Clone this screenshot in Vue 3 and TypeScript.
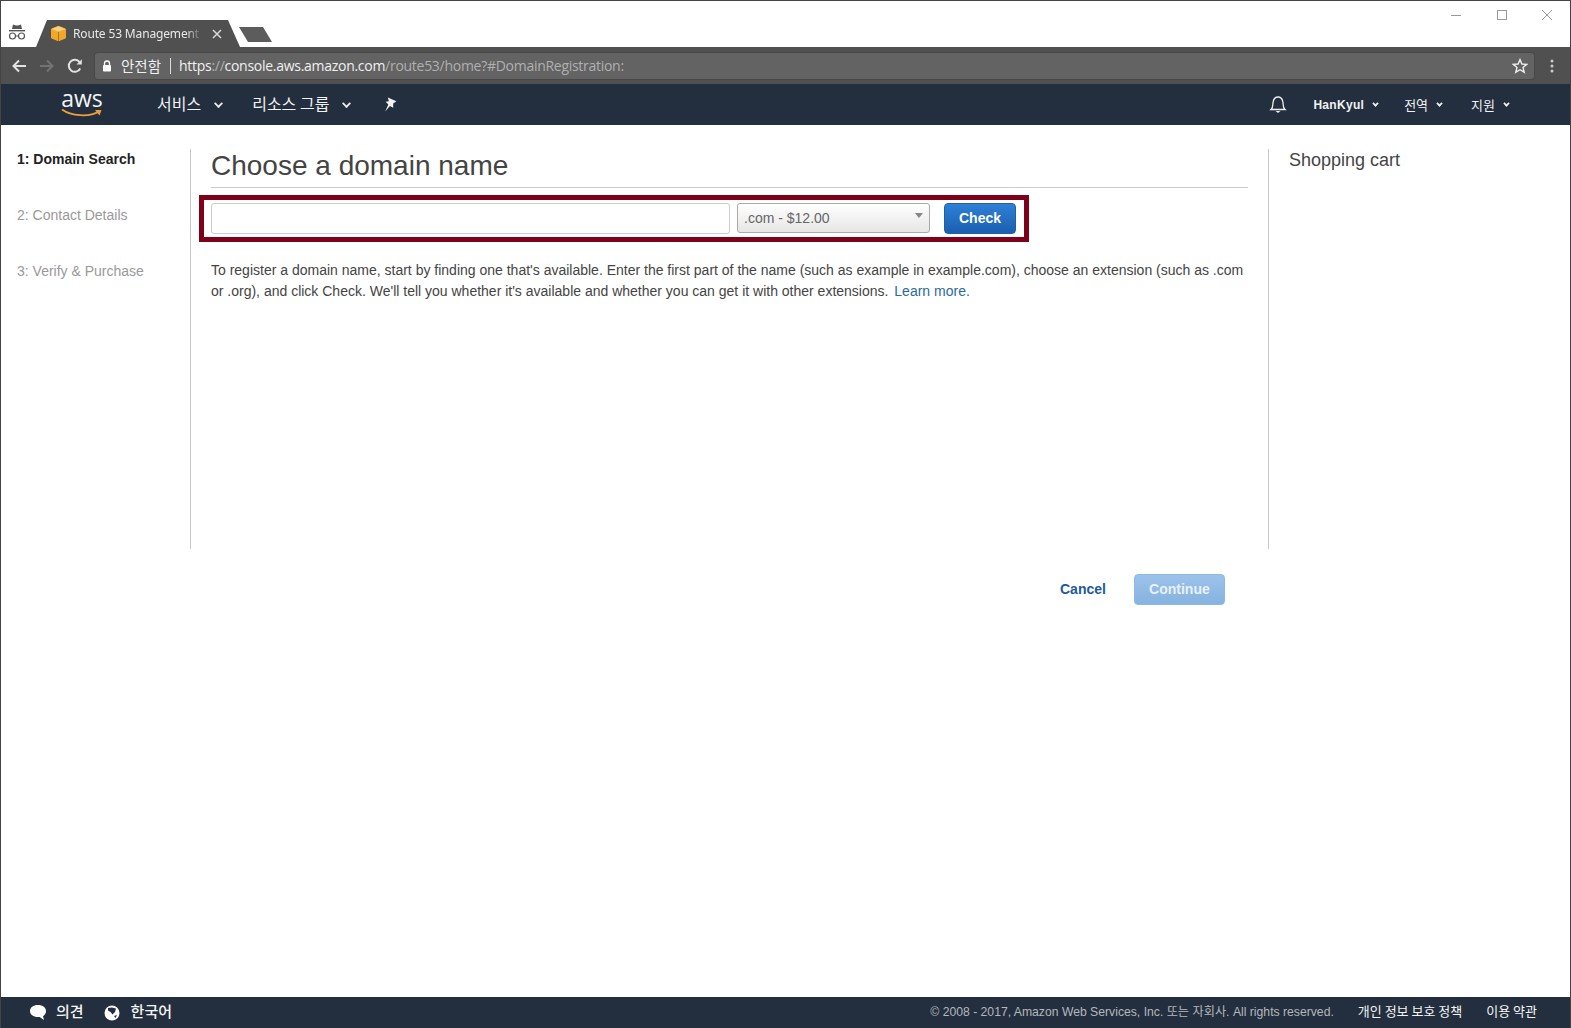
<script setup lang="ts">
const steps: { label: string; active?: boolean }[] = [
  { label: '1: Domain Search', active: true },
  { label: '2: Contact Details' },
  { label: '3: Verify & Purchase' },
]
</script>

<template>
  <div class="window">
    <div class="tabstrip">
      <svg class="incognito" width="22" height="20" viewBox="0 0 22 20">
        <path d="M6 7 L7 2.5 L10 3.5 L12 3.5 L15 2.5 L16 7 Z" fill="#555" />
        <rect x="3" y="8" width="16" height="1.4" fill="#555" />
        <circle cx="6.5" cy="14" r="3" fill="none" stroke="#555" stroke-width="1.2" />
        <circle cx="15.5" cy="14" r="3" fill="none" stroke="#555" stroke-width="1.2" />
        <path d="M9.5 14 H12.5" stroke="#555" stroke-width="1" />
      </svg>
      <div class="tab">
        <svg class="favicon" width="15" height="15" viewBox="0 0 15 15">
          <path d="M7.5 0.3 L14.5 3 V12 L7.5 14.8 L0.5 12 V3 Z" fill="#f0a72a" stroke="#f0a72a" stroke-linejoin="round" />
          <path d="M7.5 0.3 L14.5 3 L7.5 5.8 L0.5 3 Z" fill="#f8cf7c" />
          <path d="M7.5 5.8 V14.8" stroke="#a86f14" stroke-width="0.9" fill="none" />
        </svg>
        <span class="tab-title">Route 53 Management</span>
        <svg class="tab-close" width="10" height="10" viewBox="0 0 10 10">
          <path d="M1 1 L9 9 M9 1 L1 9" stroke="#d8d8d8" stroke-width="1.5" />
        </svg>
      </div>
      <div class="newtab"></div>
      <div class="winctl">
        <svg width="12" height="12" viewBox="0 0 12 12"><path d="M1 6.5 H11" stroke="#999" /></svg>
        <svg width="12" height="12" viewBox="0 0 12 12"><rect x="1.5" y="1.5" width="9" height="9" fill="none" stroke="#999" /></svg>
        <svg width="12" height="12" viewBox="0 0 12 12"><path d="M1 1 L11 11 M11 1 L1 11" stroke="#999" /></svg>
      </div>
    </div>

    <div class="toolbar">
      <svg class="tb-icon" width="16" height="16" viewBox="0 0 16 16">
        <path d="M15 8 H3 M8 2.5 L2.5 8 L8 13.5" fill="none" stroke="#e2e2e2" stroke-width="2" />
      </svg>
      <svg class="tb-icon" width="16" height="16" viewBox="0 0 16 16">
        <path d="M1 8 H13 M8 2.5 L13.5 8 L8 13.5" fill="none" stroke="#737373" stroke-width="2" />
      </svg>
      <svg class="tb-icon" width="16" height="16" viewBox="0 0 16 16">
        <path d="M13.2 10.5 A6 6 0 1 1 12.6 4.2" fill="none" stroke="#e2e2e2" stroke-width="2" />
        <path d="M9.5 6.5 H14.8 V1.2 Z" fill="#e2e2e2" />
      </svg>
      <div class="omnibox">
        <svg class="lock" width="10" height="12" viewBox="0 0 10 12">
          <path d="M2.5 5 V3.5 A2.5 2.5 0 0 1 7.5 3.5 V5" fill="none" stroke="#fff" stroke-width="1.3" />
          <rect x="1" y="5" width="8" height="6.5" rx="1" fill="#fff" />
        </svg>
        <span class="secure">안전함</span>
        <span class="omni-sep"></span>
        <span class="url">https<span class="dim">://</span>console.aws.amazon.com<span class="dim">/route53/home?#DomainRegistration:</span></span>
        <svg class="star" width="16" height="16" viewBox="0 0 16 16">
          <path d="M8 1.6 L9.9 6 L14.7 6.4 L11 9.5 L12.2 14.2 L8 11.7 L3.8 14.2 L5 9.5 L1.3 6.4 L6.1 6 Z" fill="none" stroke="#eee" stroke-width="1.4" />
        </svg>
      </div>
      <svg class="kebab" width="4" height="14" viewBox="0 0 4 14">
        <circle cx="2" cy="2" r="1.5" fill="#ccc" /><circle cx="2" cy="7" r="1.5" fill="#ccc" /><circle cx="2" cy="12" r="1.5" fill="#ccc" />
      </svg>
    </div>

    <nav class="awsnav">
      <div class="aws-logo">
        <span class="aws-word">aws</span>
        <svg class="smile" width="42" height="10" viewBox="0 0 42 10">
          <path d="M1 1.5 C10 8 28 9.5 38 3.5" fill="none" stroke="#f19e39" stroke-width="1.8" />
          <path d="M34 2 L40.5 2 L38.5 7.5 Z" fill="#f19e39" />
        </svg>
      </div>
      <span class="nav-item big first"><span class="nudge">서비스</span><i class="caret big-caret"></i></span>
      <span class="nav-item big second"><span class="nudge">리소스 그룹</span><i class="caret big-caret"></i></span>
      <svg class="pin" width="15" height="15" viewBox="0 0 14 14">
        <path d="M4.5 0.5 L12.5 4 L9.5 6 L9.5 10 L6.5 8.5 L2 13.5 L5 7 L2.5 4.5 L5.5 4 Z" fill="#f2f2f2" />
      </svg>
      <span class="nav-spacer"></span>
      <svg class="bell" width="18" height="19" viewBox="0 0 18 19">
        <path d="M2 14.5 C4.5 12.5 3.5 9 4.2 6.5 C4.8 3.8 6.8 2 9 2 C11.2 2 13.2 3.8 13.8 6.5 C14.5 9 13.5 12.5 16 14.5 Z" fill="none" stroke="#eee" stroke-width="1.3" />
        <path d="M6.5 16 H11.5 L9 18 Z" fill="#eee" />
      </svg>
      <span class="nav-item small user">HanKyul<i class="caret"></i></span>
      <span class="nav-item small region">전역<i class="caret"></i></span>
      <span class="nav-item small support">지원<i class="caret"></i></span>
    </nav>

    <main class="page">
      <div class="columns">
        <aside class="steps">
          <div v-for="s in steps" :key="s.label" class="step" :class="{ active: s.active }">{{ s.label }}</div>
        </aside>
        <section class="center">
          <h1 class="title">Choose a domain name</h1>
          <div class="search-box">
            <input class="domain-input" type="text" />
            <div class="tld">
              <span>.com - $12.00</span>
              <i class="tld-arrow"></i>
            </div>
            <button class="btn check">Check</button>
          </div>
          <p class="intro">
            To register a domain name, start by finding one that's available. Enter the first part of the name (such as example in example.com), choose an extension (such as .com or .org), and click Check. We'll tell you whether it's available and whether you can get it with other extensions.
            <a class="learn">Learn more.</a>
          </p>
        </section>
        <aside class="cart">Shopping cart</aside>
      </div>
      <div class="actions">
        <a class="cancel">Cancel</a>
        <button class="btn continue">Continue</button>
      </div>
    </main>

    <footer class="foot">
      <svg class="foot-icon" width="18" height="17" viewBox="0 0 18 17">
        <path d="M9 1 C13.8 1 17 3.6 17 7 C17 9.4 15.7 11.2 14 12.2 L15 16 L10.6 13 C10 13.1 9.5 13.1 9 13.1 C4.2 13.1 1 10.4 1 7 C1 3.6 4.2 1 9 1 Z" fill="#fff" />
      </svg>
      <span class="foot-lang first-lang">의견</span>
      <svg class="foot-icon globe" width="16" height="16" viewBox="0 0 16 16">
        <circle cx="8" cy="8" r="7.5" fill="#fff" />
        <path d="M4 3 L8 2.5 L12 3.5 L11 7 L8.5 9.5 L6.5 7 L4 5.5 Z M10 11 L13 10 L11.5 13 Z" fill="#232f3e" />
      </svg>
      <span class="foot-lang">한국어</span>
      <span class="nav-spacer"></span>
      <span class="copy">© 2008 - 2017, Amazon Web Services, Inc. 또는 자회사. All rights reserved.</span>
      <span class="foot-link privacy">개인 정보 보호 정책</span>
      <span class="foot-link terms">이용 약관</span>
    </footer>
  </div>
</template>

<style scoped>
.window {
  box-sizing: border-box;
  height: 1028px;
  width: 1571px;
  display: flex;
  flex-direction: column;
  border: 1px solid #444;
  border-bottom: 0;
  background: #fff;
  font-family: "Liberation Sans", "Noto Sans CJK KR", sans-serif;
  overflow: hidden;
}
.tabstrip {
  height: 46px;
  display: flex;
  align-items: flex-end;
  position: relative;
  background: #fff;
  flex: none;
}
.incognito { margin: 0 0 5px 5px; flex: none; }
.tab {
  width: 204px;
  height: 27px;
  margin-left: 8px;
  background: #505050;
  clip-path: polygon(0 100%, 11px 0, 192px 0, 100% 100%);
  display: flex;
  align-items: center;
  box-sizing: border-box;
  padding: 0 0 0 15px;
  flex: none;
}
.favicon { flex: none; }
.tab-title {
  margin-left: 7px;
  font-family: "Noto Sans", "Liberation Sans", sans-serif;
  font-size: 12px;
  letter-spacing: -0.15px;
  color: #e8e8e8;
  white-space: nowrap;
  width: 129px;
  overflow: hidden;
  -webkit-mask-image: linear-gradient(to right, #000 88%, transparent 100%);
  mask-image: linear-gradient(to right, #000 88%, transparent 100%);
}
.tab-close { margin-left: 10px; flex: none; }
.newtab {
  width: 33px;
  height: 15px;
  margin: 0 0 5px -1px;
  background: #5c5c5c;
  clip-path: polygon(0 0, 24px 0, 100% 100%, 9px 100%);
  flex: none;
}
.winctl {
  position: absolute;
  top: 8px;
  right: 17px;
  display: flex;
  gap: 33.5px;
}
.toolbar {
  height: 37px;
  flex: none;
  background: #505050;
  display: flex;
  align-items: center;
  padding-left: 10px;
}
.tb-icon { margin-right: 12px; flex: none; }
.omnibox {
  flex: none;
  width: 1439px;
  margin-left: 0;
  height: 26px;
  background: #636363;
  border-radius: 3px;
  box-sizing: border-box;
  display: flex;
  align-items: center;
  padding: 0 6px 0 7px;
  box-shadow: 0 0 0 1px #484848;
  font-size: 14px;
  color: #f0f0f0;
}
.lock { flex: none; }
.secure {
  margin-left: 9px;
  font-size: 14.5px;
  font-family: "Noto Sans CJK KR", sans-serif;
}
.omni-sep { width: 1px; height: 16px; background: #ddd; margin: 0 7px 0 9px; }
.url { font-family: "Open Sans", "Liberation Sans", sans-serif; font-size: 14px; white-space: nowrap; letter-spacing: -0.28px; flex: 1; margin-left: 1px; }
.dim { color: #b0b0b0; }
.star { flex: none; }
.kebab { margin-left: 16px; flex: none; }
.awsnav {
  height: 41px;
  flex: none;
  background: #232f3e;
  display: flex;
  align-items: center;
  color: #f2f2f2;
  font-family: "Noto Sans CJK KR", "Liberation Sans", sans-serif;
}
.aws-logo {
  margin-left: 60px;
  width: 42px;
  display: flex;
  flex-direction: column;
  align-items: center;
  margin-top: -3px;
  flex: none;
}
.aws-word {
  font-family: "Open Sans", "Liberation Sans", sans-serif;
  font-size: 23px;
  line-height: 18px;
  color: #f4f4f4;
}
.smile { margin-top: 1px; }
.nav-item { white-space: nowrap; display: flex; align-items: center; }
.big { font-size: 16px; }
.nudge { margin-top: -4px; }
.small { font-size: 13px; }
.first { margin-left: 54px; }
.second { margin-left: 30px; }
.pin { margin-left: 33px; flex: none; }
.nav-spacer { flex: 1; }
.caret {
  width: 5px;
  height: 5px;
  box-sizing: border-box;
  display: inline-block;
  border-right: 2px solid #eee;
  border-bottom: 2px solid #eee;
  transform: rotate(45deg) scale(0.9);
  margin: -2px 0 0 9px;
}
.big-caret { width: 7px; height: 7px; margin-left: 14px; }
.bell { margin-right: 26px; flex: none; }
.user { font-family: "Liberation Sans", sans-serif; font-size: 12px; font-weight: 700; letter-spacing: 0.3px; margin-right: 26px; }
.region { margin-right: 29px; }
.support { margin-right: 61px; }
.page { flex: 1; min-height: 0; display: flex; flex-direction: column; }
.columns { display: flex; margin-top: 24px; height: 400px; }
.steps {
  width: 190px;
  box-sizing: border-box;
  border-right: 1px solid #c8c8c8;
  padding: 2px 0 0 16px;
  flex: none;
}
.step { font-size: 14px; color: #999; height: 56px; line-height: 16px; }
.step.active { color: #222; font-weight: 700; }
.center {
  width: 1078px;
  box-sizing: border-box;
  border-right: 1px solid #c8c8c8;
  padding: 0 20px;
  flex: none;
}
.title {
  margin: 0;
  font-size: 28px;
  font-weight: 400;
  line-height: 34px;
  color: #444;
  height: 38px;
  border-bottom: 1px solid #ccc;
}
.search-box {
  margin: 7px 0 0 -12px;
  width: 830px;
  height: 47px;
  box-sizing: border-box;
  border: 5px solid #7f0019;
  display: flex;
  align-items: flex-start;
  padding: 3px 0 0 7px;
}
.domain-input {
  width: 519px;
  height: 31px;
  box-sizing: border-box;
  border: 1px solid #ccc;
  border-radius: 3px;
  background: #fff;
  margin: 0;
  padding: 0;
  outline: none;
  flex: none;
}
.tld {
  width: 193px;
  height: 30px;
  box-sizing: border-box;
  margin-left: 7px;
  border: 1px solid #aaa;
  border-radius: 3px;
  background: linear-gradient(#fff, #e6e6e6);
  color: #666;
  font-size: 14px;
  padding-left: 6px;
  line-height: 28px;
  position: relative;
  flex: none;
}
.tld-arrow {
  position: absolute;
  right: 6px;
  top: 9px;
  width: 0;
  height: 0;
  border-left: 4px solid transparent;
  border-right: 4px solid transparent;
  border-top: 5px solid #888;
}
.btn {
  border-radius: 4px;
  font-family: "Liberation Sans", sans-serif;
  font-weight: 700;
  font-size: 14px;
  color: #fff;
  padding: 0 0 2px;
  margin: 0;
  flex: none;
}
.check {
  width: 72px;
  height: 31px;
  margin-left: 14px;
  border: 1px solid #1d5fa8;
  background: linear-gradient(#2f80d6, #1a5fb0);
}
.intro {
  margin: 18px 0 0;
  font-size: 14px;
  line-height: 21px;
  color: #444;
}
.learn { color: #2a6a9c; margin-left: 2px; }
.cart {
  padding: 0 0 0 20px;
  font-size: 18px;
  line-height: 22px;
  color: #444;
}
.actions {
  display: flex;
  align-items: center;
  margin: 25px 0 0 1059px;
}
.cancel { font-size: 14px; font-weight: 700; color: #1e5a9a; padding-bottom: 2px; }
.continue {
  width: 91px;
  height: 31px;
  margin-left: 28px;
  border: 1px solid #8fb8e2;
  background: linear-gradient(#9cc2ea, #86b3e0);
  color: #e8f1fa;
}
.foot {
  height: 31px;
  flex: none;
  background: #232f3e;
  display: flex;
  align-items: center;
  color: #f4f4f4;
  font-family: "Noto Sans CJK KR", "Liberation Sans", sans-serif;
}
.foot-icon { margin-left: 28px; flex: none; }
.globe { margin-left: 20px; }
.foot-lang { font-size: 15px; font-weight: 500; margin-left: 11px; margin-top: -4px; }
.first-lang { margin-left: 9px; }
.copy { font-family: "Liberation Sans", "Noto Sans CJK KR", sans-serif; font-size: 12.2px; color: #b4b8bd; margin-top: -3px; }
.foot-link { font-size: 13px; white-space: nowrap; margin-top: -5px; }
.privacy { margin-left: 24px; }
.terms { margin-left: 24px; margin-right: 33px; }
</style>

<style>
html, body { margin: 0; padding: 0; background: #fff; }
</style>
